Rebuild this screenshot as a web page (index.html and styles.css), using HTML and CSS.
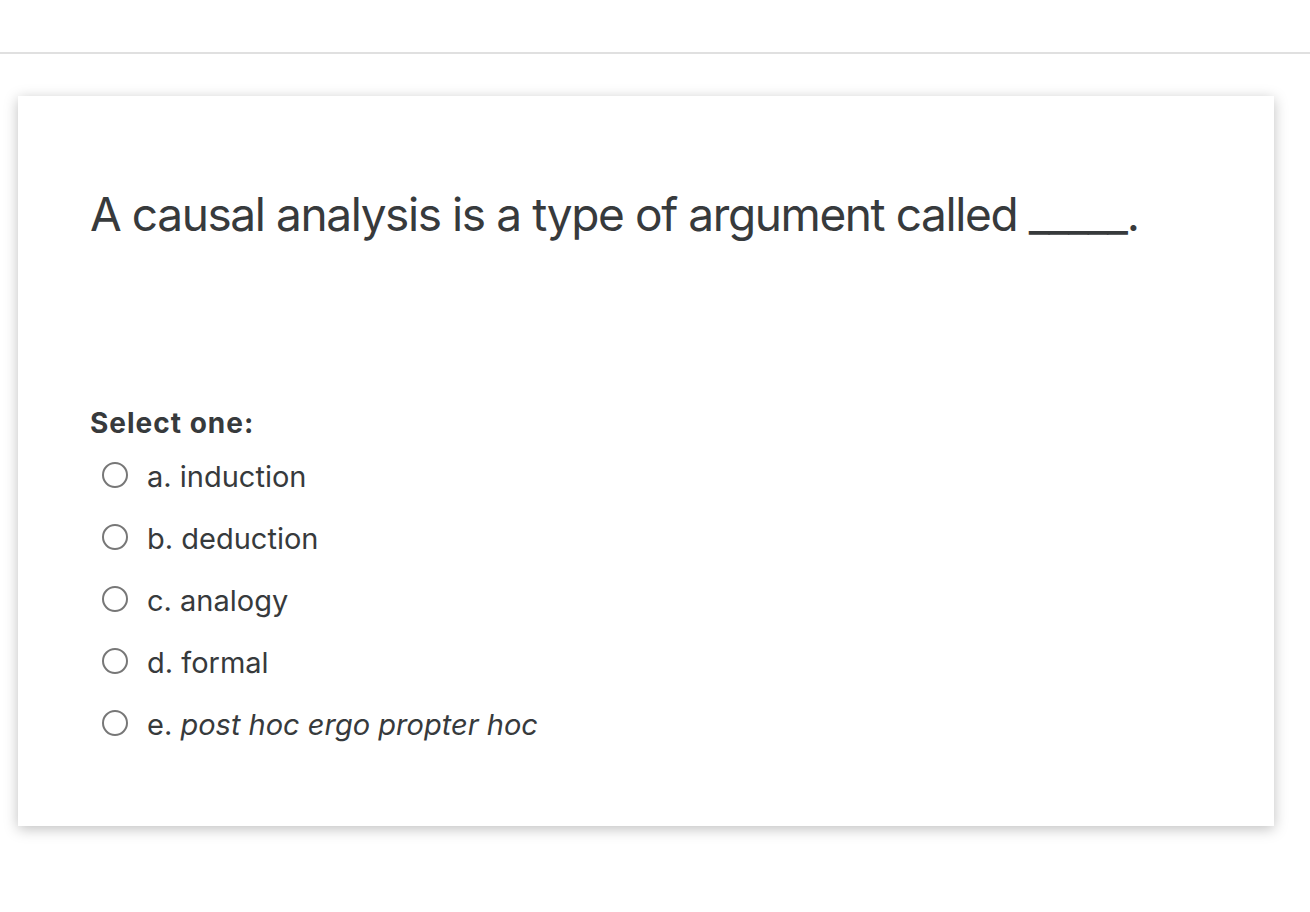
FILE: index.html
```html
<!DOCTYPE html>
<html>
<head>
<meta charset="utf-8">
<link rel="stylesheet" href="styles.css">
</head>
<body>
<div class="topbar"></div>
<div class="card">
  <div class="question">A causal analysis is a type of argument called _____.</div>
  <div class="prompt">Select one:</div>
  <div class="options">
    <label class="opt"><span class="radio"></span><span class="txt">a. induction</span></label>
    <label class="opt"><span class="radio"></span><span class="txt">b. deduction</span></label>
    <label class="opt"><span class="radio"></span><span class="txt">c. analogy</span></label>
    <label class="opt"><span class="radio"></span><span class="txt">d. formal</span></label>
    <label class="opt"><span class="radio"></span><span class="txt">e. <em>post hoc ergo propter hoc</em></span></label>
  </div>
</div>
</body>
</html>
```
FILE: styles.css
```css
html, body { margin: 0; padding: 0; background: #fff; }
body { font-family: Inter, "Noto Sans", sans-serif; color: #373a3c; min-height: 912px; padding-bottom: 40px; box-sizing: border-box; }
.topbar { height: 52px; border-bottom: 2px solid #e0e0e0; }
.card {
  margin: 42px 36px 0 18px;
  height: 730px;
  box-sizing: border-box;
  background: #fff;
  box-shadow: 0 3px 13px rgba(0,0,0,0.25);
  padding: 88px 72px 0 72px;
}
.question { font-size: 46px; line-height: 60px; letter-spacing: -1.4px; white-space: nowrap; }
.prompt { margin-top: 161px; font-size: 28px; font-weight: 700; line-height: 36px; letter-spacing: 1px; }
.options { display: flex; flex-direction: column; gap: 22px; margin-top: 16px; padding-left: 12px; }
.opt { display: flex; align-items: center; height: 40px; gap: 19px; font-size: 29px; }
.radio { width: 22px; height: 22px; border: 2px solid #777; border-radius: 50%; flex: none; margin-top: -4px; }
.txt { line-height: 40px; }
em { font-style: italic; }
```
